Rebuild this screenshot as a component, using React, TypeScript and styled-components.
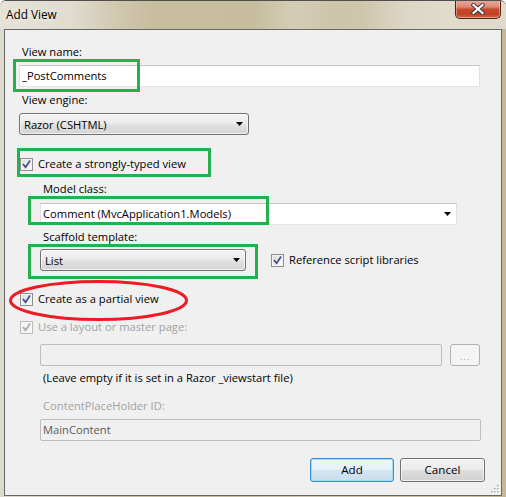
import React from 'react';
import styled, { createGlobalStyle } from 'styled-components';

const Global = createGlobalStyle`
  html, body { margin: 0; padding: 0; background: #ffffff; }
  body {
    font-family: "Open Sans", "Segoe UI", "Liberation Sans", sans-serif;
    font-size: 11.2px;
    color: #000000;
  }
  * { box-sizing: border-box; }
`;

const Window = styled.div`
  position: relative;
  width: 506px;
  height: 497px;
  display: flex;
  flex-direction: column;
  overflow: hidden;
  border-top: 1px solid #4f4f4f;
  border-radius: 6px 6px 0 0;
  background: linear-gradient(90deg, #dedad0 0%, #d6d0bf 10%, #c9c0a4 24%, #c6bd9f 45%, #cfc7ae 60%, #cac1a5 75%, #cbc1a3 92%, #c3b794 100%);
`;

const TitleBar = styled.div`
  flex: none;
  height: 28px;
  display: flex;
  justify-content: space-between;
  align-items: flex-start;
  background: linear-gradient(90deg, #e6e2d7 0%, #e1dccf 14%, #d2cab2 22%, #c7be9f 30%, #c6bd9e 50%, #d4cdb6 58%, #cdc5aa 66%, #cfc7ad 72%, #dcd6c5 80%, #e0dbcc 88%, #dfdaca 100%);
`;

const TitleText = styled.div`
  margin: 5px 0 0 6px;
  line-height: 16px;
  font-size: 11.8px;
  color: #000;
  text-shadow: 0 0 6px rgba(255,255,255,0.9);
`;

const CloseButton = styled.div`
  width: 46px;
  height: 19px;
  margin: -1px 5px 0 0;
  border: 1px solid #4e2419;
  border-top: none;
  border-radius: 0 0 5px 5px;
  background: linear-gradient(180deg, #e8ab9c 0%, #de8a75 38%, #c84a2b 52%, #c23f22 78%, #d2694b 100%);
  box-shadow: inset 0 0 0 1px rgba(255, 220, 210, 0.45);
  display: flex;
  align-items: center;
  justify-content: center;
`;

const Client = styled.div`
  position: relative;
  flex: 1;
  margin: 0 4px 1px 4px;
  background: #f0f0f0;
  border: 1px solid #676767;
  display: flex;
  flex-direction: column;
  padding: 14px 0 0 14px;
`;

const Indent = styled.div`
  display: flex;
  flex-direction: column;
  padding-left: 21px;
`;

const Label = styled.div<{ $mt?: number; $muted?: boolean }>`
  margin-top: ${p => p.$mt ?? 0}px;
  height: 16px;
  line-height: 16px;
  padding-left: 3px;
  white-space: nowrap;
  color: ${p => (p.$muted ? '#a2a2a2' : '#000000')};
`;

const TextBox = styled.div<{ $w: number; $mt?: number; $disabled?: boolean }>`
  margin-top: ${p => p.$mt ?? 0}px;
  width: ${p => p.$w}px;
  height: 22px;
  flex: none;
  padding: 0 2px;
  line-height: 20px;
  white-space: nowrap;
  border: 1px solid;
  border-radius: ${p => (p.$disabled ? '2px' : '0')};
  border-color: ${p => (p.$disabled ? '#bdbdbd' : '#c6c6c6 #e0e0e0 #e6e6e6 #e0e0e0')};
  background: ${p => (p.$disabled ? '#f0f0f0' : '#ffffff')};
  color: ${p => (p.$disabled ? '#5a5a5a' : '#000000')};
  display: flex;
  align-items: center;
  justify-content: space-between;
`;

const ComboArrowBox = styled.span`
  display: flex;
  align-items: center;
  padding-right: 3px;
`;

const Select = styled.div<{ $w: number; $mt?: number }>`
  margin-top: ${p => p.$mt ?? 0}px;
  width: ${p => p.$w}px;
  height: 22px;
  flex: none;
  border: 1px solid #707070;
  border-radius: 3px;
  background: linear-gradient(180deg, #f4f4f4 0%, #ececec 45%, #e1e1e1 55%, #d4d4d4 100%);
  box-shadow: inset 0 0 0 1px rgba(255, 255, 255, 0.65);
  display: flex;
  align-items: center;
  justify-content: space-between;
  padding: 0 5px 0 4px;
  white-space: nowrap;
`;

const Row = styled.div<{ $mt?: number; $gap?: number }>`
  margin-top: ${p => p.$mt ?? 0}px;
  display: flex;
  align-items: center;
  gap: ${p => p.$gap ?? 0}px;
`;

const CheckRow = styled.div<{ $mt?: number; $ml?: number; $disabled?: boolean }>`
  margin-top: ${p => p.$mt ?? 0}px;
  margin-left: ${p => p.$ml ?? 0}px;
  height: 16px;
  line-height: 16px;
  display: flex;
  align-items: center;
  gap: 5px;
  padding-left: 1px;
  white-space: nowrap;
  color: ${p => (p.$disabled ? '#a2a2a2' : '#000000')};
`;

const Box = styled.span<{ $disabled?: boolean }>`
  width: 13px;
  height: 13px;
  flex: none;
  border: 1px solid ${p => (p.$disabled ? '#bcbcbc' : '#8e8f8f')};
  background: ${p => (p.$disabled ? '#f4f4f4' : 'linear-gradient(135deg, #d8d8d8 0%, #eeeeee 50%, #fbfbfb 100%)')};
  box-shadow: inset 0 0 0 1px ${p => (p.$disabled ? '#f7f7f7' : '#f4f4f4')};
  display: flex;
  align-items: center;
  justify-content: center;
`;

const Browse = styled.div`
  width: 30px;
  height: 22px;
  flex: none;
  border: 1px solid #adb2b5;
  border-radius: 3px;
  background: #f4f4f4;
  display: flex;
  align-items: center;
  justify-content: center;
  color: #a6a6a6;
  font-size: 9px;
  letter-spacing: 1px;
  padding-top: 2px;
`;

const Note = styled.div<{ $mt?: number }>`
  margin-top: ${p => p.$mt ?? 0}px;
  height: 16px;
  line-height: 16px;
  padding-left: 3px;
  white-space: nowrap;
`;

const ButtonRow = styled.div`
  margin-top: 17px;
  margin-right: 16px;
  display: flex;
  justify-content: flex-end;
  gap: 6px;
`;

const Button = styled.div<{ $w: number; $default?: boolean }>`
  width: ${p => p.$w}px;
  height: 24px;
  border-radius: 3px;
  border: 1px solid ${p => (p.$default ? '#3c8fd0' : '#707070')};
  background: ${p =>
    p.$default
      ? 'linear-gradient(180deg, #eff7fc 0%, #e5f1f9 48%, #d5e6f2 52%, #c9dceb 100%)'
      : 'linear-gradient(180deg, #f3f3f3 0%, #ebebeb 48%, #dddddd 52%, #d0d0d0 100%)'};
  box-shadow: inset 0 0 0 1px ${p => (p.$default ? '#9fdcf7' : 'rgba(255,255,255,0.7)')};
  display: flex;
  align-items: center;
  justify-content: center;
  line-height: 16px;
  font-size: 11.6px;
`;

const Annotation = styled.div<{ $l: number; $t: number; $w: number; $h: number }>`
  position: absolute;
  left: ${p => p.$l}px;
  top: ${p => p.$t}px;
  width: ${p => p.$w}px;
  height: ${p => p.$h}px;
  border: 3px solid #22b14c;
  pointer-events: none;
`;

const EllipseMark = styled.svg`
  position: absolute;
  left: 6px;
  top: 276px;
  pointer-events: none;
`;

const Grip = styled.svg`
  position: absolute;
  right: 1px;
  bottom: 1px;
`;

const Arrow = () => (
  <svg width="7" height="4" viewBox="0 0 7 4">
    <polygon points="0,0 7,0 3.5,4" fill="#000" />
  </svg>
);

const Check = ({ disabled }: { disabled?: boolean }) => (
  <svg width="9" height="9" viewBox="0 0 9 9">
    <path
      d="M1.5 4.6 L3.6 7.2 L7.6 1.2"
      fill="none"
      stroke={disabled ? '#a9a9a9' : '#3f4f8f'}
      strokeWidth="1.7"
      strokeLinecap="square"
    />
  </svg>
);

const CheckBox = ({ disabled }: { disabled?: boolean }) => (
  <Box $disabled={disabled}>
    <Check disabled={disabled} />
  </Box>
);

export default function App() {
  return (
    <>
      <Global />
      <Window>
        <TitleBar>
          <TitleText>Add View</TitleText>
          <CloseButton>
            <svg width="14" height="12" viewBox="0 0 14 12">
              <path d="M2.5 2 L11.5 10 M11.5 2 L2.5 10" stroke="#3a3a46" strokeWidth="4.2" strokeLinecap="square" />
              <path d="M2.5 2 L11.5 10 M11.5 2 L2.5 10" stroke="#ffffff" strokeWidth="2.2" strokeLinecap="square" />
            </svg>
          </CloseButton>
        </TitleBar>
        <Client>
          <Label>View name:</Label>
          <TextBox $w={461} $mt={5}>_PostComments</TextBox>
          <Label $mt={5}>View engine:</Label>
          <Select $w={230} $mt={5}>
            <span>Razor (CSHTML)</span>
            <Arrow />
          </Select>
          <CheckRow $mt={21}>
            <CheckBox />
            <span>Create a strongly-typed view</span>
          </CheckRow>
          <Indent>
            <Label $mt={9}>Model class:</Label>
            <TextBox $w={417} $mt={6}>
              <span>Comment (MvcApplication1.Models)</span>
              <ComboArrowBox>
                <Arrow />
              </ComboArrowBox>
            </TextBox>
            <Label $mt={4}>Scaffold template:</Label>
            <Row $mt={4}>
              <Select $w={206}>
                <span>List</span>
                <Arrow />
              </Select>
              <CheckRow $ml={24}>
                <CheckBox />
                <span>Reference script libraries</span>
              </CheckRow>
            </Row>
          </Indent>
          <CheckRow $mt={20}>
            <CheckBox />
            <span>Create as a partial view</span>
          </CheckRow>
          <CheckRow $mt={12} $disabled>
            <CheckBox disabled />
            <span>Use a layout or master page:</span>
          </CheckRow>
          <Indent>
            <Row $mt={9} $gap={8}>
              <TextBox $w={402} $disabled />
              <Browse>...</Browse>
            </Row>
            <Note $mt={4}>(Leave empty if it is set in a Razor _viewstart file)</Note>
            <Label $mt={12} $muted>
              ContentPlaceHolder ID:
            </Label>
            <TextBox $w={441} $mt={5} $disabled>
              MainContent
            </TextBox>
          </Indent>
          <ButtonRow>
            <Button $w={84} $default>
              Add
            </Button>
            <Button $w={85}>Cancel</Button>
          </ButtonRow>
          <Grip width="10" height="10" viewBox="0 0 10 10">
            {[
              [7, 1],
              [7, 4],
              [4, 4],
              [7, 7],
              [4, 7],
              [1, 7],
            ].map(([x, y], i) => (
              <g key={i}>
                <rect x={x + 1} y={y + 1} width="1.5" height="1.5" fill="#ffffff" />
                <rect x={x} y={y} width="1.5" height="1.5" fill="#a4a4a4" />
              </g>
            ))}
          </Grip>
        </Client>
        <Annotation $l={13} $t={58} $w={127} $h={33} />
        <Annotation $l={17} $t={147} $w={194} $h={29} />
        <Annotation $l={28} $t={195} $w={241} $h={29} />
        <Annotation $l={28} $t={243} $w={230} $h={35} />
        <EllipseMark width="186" height="48" viewBox="0 0 186 48">
          <ellipse cx="92.5" cy="23.5" rx="88" ry="19" fill="none" stroke="#ed1c24" strokeWidth="3" />
        </EllipseMark>
      </Window>
    </>
  );
}
